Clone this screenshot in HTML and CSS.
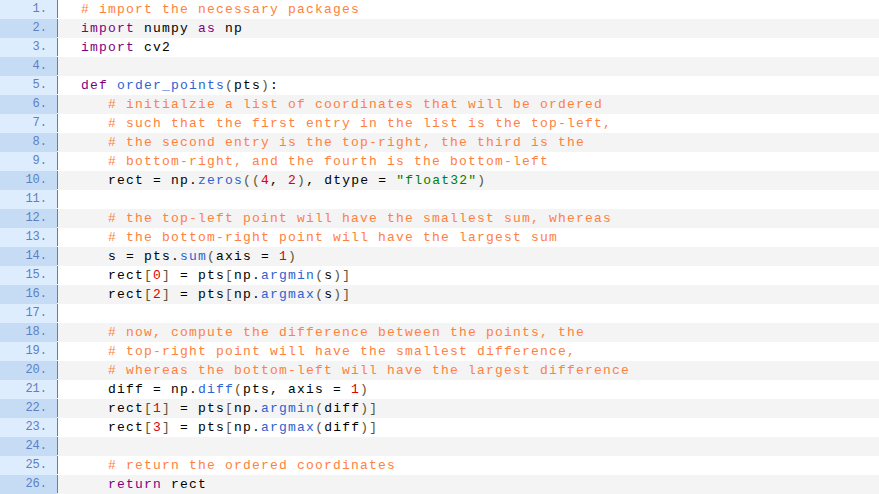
FILE: index.html
```html
<!DOCTYPE html>
<html>
<head>
<meta charset="utf-8">
<link rel="stylesheet" href="styles.css">
</head>
<body>
<div class="code">
<div class="row"><div class="num">1.</div><div class="rule"></div><div class="line"><span class="c"># import the necessary packages</span></div></div>
<div class="row"><div class="num">2.</div><div class="rule"></div><div class="line"><span class="k">import</span> numpy <span class="k">as</span> np</div></div>
<div class="row"><div class="num">3.</div><div class="rule"></div><div class="line"><span class="k">import</span> cv2</div></div>
<div class="row"><div class="num">4.</div><div class="rule"></div><div class="line"> </div></div>
<div class="row"><div class="num">5.</div><div class="rule"></div><div class="line"><span class="k">def</span> <span class="f">order_points</span><span class="b">(</span>pts<span class="b">)</span>:</div></div>
<div class="row"><div class="num">6.</div><div class="rule"></div><div class="line">   <span class="c"># initialzie a list of coordinates that will be ordered</span></div></div>
<div class="row"><div class="num">7.</div><div class="rule"></div><div class="line">   <span class="c"># such that the first entry in the list is the top-left,</span></div></div>
<div class="row"><div class="num">8.</div><div class="rule"></div><div class="line">   <span class="c"># the second entry is the top-right, the third is the</span></div></div>
<div class="row"><div class="num">9.</div><div class="rule"></div><div class="line">   <span class="c"># bottom-right, and the fourth is the bottom-left</span></div></div>
<div class="row"><div class="num">10.</div><div class="rule"></div><div class="line">   rect = np.<span class="f">zeros</span><span class="b">((</span><span class="n">4</span>, <span class="n">2</span><span class="b">)</span>, dtype = <span class="s">"float32"</span><span class="b">)</span></div></div>
<div class="row"><div class="num">11.</div><div class="rule"></div><div class="line"> </div></div>
<div class="row"><div class="num">12.</div><div class="rule"></div><div class="line">   <span class="c"># the top-left point will have the smallest sum, whereas</span></div></div>
<div class="row"><div class="num">13.</div><div class="rule"></div><div class="line">   <span class="c"># the bottom-right point will have the largest sum</span></div></div>
<div class="row"><div class="num">14.</div><div class="rule"></div><div class="line">   s = pts.<span class="f">sum</span><span class="b">(</span>axis = <span class="n">1</span><span class="b">)</span></div></div>
<div class="row"><div class="num">15.</div><div class="rule"></div><div class="line">   rect<span class="b">[</span><span class="n">0</span><span class="b">]</span> = pts<span class="b">[</span>np.<span class="f">argmin</span><span class="b">(</span>s<span class="b">)]</span></div></div>
<div class="row"><div class="num">16.</div><div class="rule"></div><div class="line">   rect<span class="b">[</span><span class="n">2</span><span class="b">]</span> = pts<span class="b">[</span>np.<span class="f">argmax</span><span class="b">(</span>s<span class="b">)]</span></div></div>
<div class="row"><div class="num">17.</div><div class="rule"></div><div class="line"> </div></div>
<div class="row"><div class="num">18.</div><div class="rule"></div><div class="line">   <span class="c"># now, compute the difference between the points, the</span></div></div>
<div class="row"><div class="num">19.</div><div class="rule"></div><div class="line">   <span class="c"># top-right point will have the smallest difference,</span></div></div>
<div class="row"><div class="num">20.</div><div class="rule"></div><div class="line">   <span class="c"># whereas the bottom-left will have the largest difference</span></div></div>
<div class="row"><div class="num">21.</div><div class="rule"></div><div class="line">   diff = np.<span class="f">diff</span><span class="b">(</span>pts, axis = <span class="n">1</span><span class="b">)</span></div></div>
<div class="row"><div class="num">22.</div><div class="rule"></div><div class="line">   rect<span class="b">[</span><span class="n">1</span><span class="b">]</span> = pts<span class="b">[</span>np.<span class="f">argmin</span><span class="b">(</span>diff<span class="b">)]</span></div></div>
<div class="row"><div class="num">23.</div><div class="rule"></div><div class="line">   rect<span class="b">[</span><span class="n">3</span><span class="b">]</span> = pts<span class="b">[</span>np.<span class="f">argmax</span><span class="b">(</span>diff<span class="b">)]</span></div></div>
<div class="row"><div class="num">24.</div><div class="rule"></div><div class="line"> </div></div>
<div class="row"><div class="num">25.</div><div class="rule"></div><div class="line">   <span class="c"># return the ordered coordinates</span></div></div>
<div class="row"><div class="num">26.</div><div class="rule"></div><div class="line">   <span class="k">return</span> rect</div></div>
</div>
</body>
</html>
```
FILE: styles.css
```css
html, body {
  margin: 0;
  padding: 0;
  background: #ffffff;
}
.code {
  display: flex;
  flex-direction: column;
  width: 879px;
}
.row {
  display: flex;
  height: 19px;
  background: #ffffff;
}
.row:nth-child(even) {
  background: #f4f4f4;
}
.num {
  width: 57px;
  flex: none;
  box-sizing: border-box;
  padding-right: 10px;
  text-align: right;
  font-family: "Liberation Mono", monospace;
  font-size: 12px;
  line-height: 19px;
  color: #5b80c4;
  background: #deedfd;
}
.row:nth-child(even) .num {
  background: #c6dcf5;
}
.rule {
  width: 1px;
  height: 18px;
  flex: none;
  background: #7c7c7c;
}
.line {
  flex: 1;
  padding-left: 23px;
  white-space: pre;
  font-family: "Liberation Mono", monospace;
  font-size: 13px;
  letter-spacing: 1.2px;
  line-height: 19px;
  color: #000000;
}
.c { color: #ff8040; }
.k { color: #800080; }
.f { color: #2c62d0; }
.n { color: #e00000; }
.s { color: #008000; }
.b { color: #5e5636; }
```
